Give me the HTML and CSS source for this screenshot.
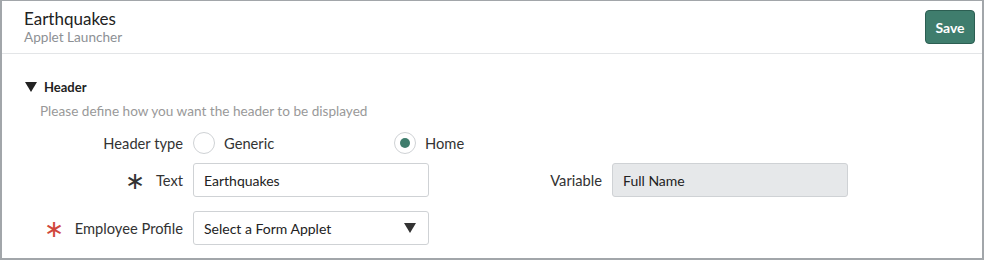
FILE: index.html
```html
<!DOCTYPE html>
<html>
<head>
<meta charset="utf-8">
<link rel="stylesheet" href="styles.css">
</head>
<body>
<div class="frame">
  <div class="topbar">
    <div class="titles">
      <div class="title">Earthquakes</div>
      <div class="subtitle">Applet Launcher</div>
    </div>
    <button class="save">Save</button>
  </div>
  <div class="section">
    <div class="section-head">
      <svg class="caret" width="12" height="10" viewBox="0 0 12 10"><path d="M0 0H12L6 10Z" fill="#222"/></svg>
      <span>Header</span>
    </div>
    <div class="desc">Please define how you want the header to be displayed</div>
    <div class="form">
      <div class="label row1">Header type</div>
      <div class="radios row1">
        <label class="radio"><span class="circle"></span>Generic</label>
        <label class="radio"><span class="circle on"></span>Home</label>
      </div>
      <div class="label row2"><span class="ast">&#x2217;</span>Text</div>
      <div class="input row2">Earthquakes</div>
      <div class="label row2">Variable</div>
      <div class="input disabled row2">Full Name</div>
      <div class="label row3"><span class="ast red">&#x2217;</span>Employee Profile</div>
      <div class="input select row3">Select a Form Applet<svg width="12" height="10" viewBox="0 0 12 10"><path d="M0 0H12L6 10Z" fill="#333"/></svg></div>
    </div>
  </div>
</div>
</body>
</html>
```
FILE: styles.css
```css
* { box-sizing: border-box; }
body { margin: 0; font-family: Lato, "Open Sans", sans-serif; color: #333; background: #fff; }
.frame { width: 984px; height: 260px; border: 2px solid #a2a6aa; border-top-width: 1px; overflow: hidden; }
.topbar { height: 53px; border-bottom: 1px solid #e3e5e7; display: flex; justify-content: space-between; align-items: flex-start; padding: 8px 7px 0 22px; }
.title { font-size: 17px; color: #222; line-height: 20px; }
.subtitle { font-size: 13.6px; color: #8d9094; line-height: 17px; }
.save { height: 34px; width: 50px; margin-top: 1px; border: 1px solid #2c5e52; background: #3f7d6d; color: #fff; border-radius: 4px; font-family: inherit; font-size: 14px; font-weight: 700; padding: 0; }
.section { padding: 23px 0 0 23px; }
.section-head { display: flex; align-items: center; gap: 7px; font-size: 13px; font-weight: 700; color: #222; height: 20px; }
.desc { font-size: 13.6px; color: #999; margin: 4px 0 0 15px; line-height: 20px; }
.form { display: grid; grid-template-columns: 181px 236px 163px 236px; column-gap: 10px; margin-left: -23px; margin-top: 11px; align-items: center; }
.label { font-size: 14.7px; color: #333; text-align: right; display: flex; justify-content: flex-end; align-items: center; }
.row1 { height: 22px; }
.row2 { margin-top: 9px; height: 34px; }
.row3 { margin-top: 14px; height: 34px; }
.ast { font-size: 24px; line-height: 14px; margin-right: 11px; color: #333; }
.ast.red { color: #d0483c; }
.radios { display: flex; grid-column: 2 / 5; }
.radio { display: flex; align-items: center; width: 201px; font-size: 14.7px; color: #333; }
.circle { width: 22px; height: 22px; border: 1px solid #cfd2d5; border-radius: 50%; margin-right: 9px; display: flex; align-items: center; justify-content: center; }
.circle.on::after { content: ""; width: 10px; height: 10px; border-radius: 50%; background: #3f7d6d; }
.input { border: 1px solid #cfd2d5; border-radius: 3px; font-size: 14px; color: #222; padding: 0 10px; display: flex; align-items: center; }
.disabled { background: #e6e8ea; }
.select { justify-content: space-between; padding-right: 12px; }
```
